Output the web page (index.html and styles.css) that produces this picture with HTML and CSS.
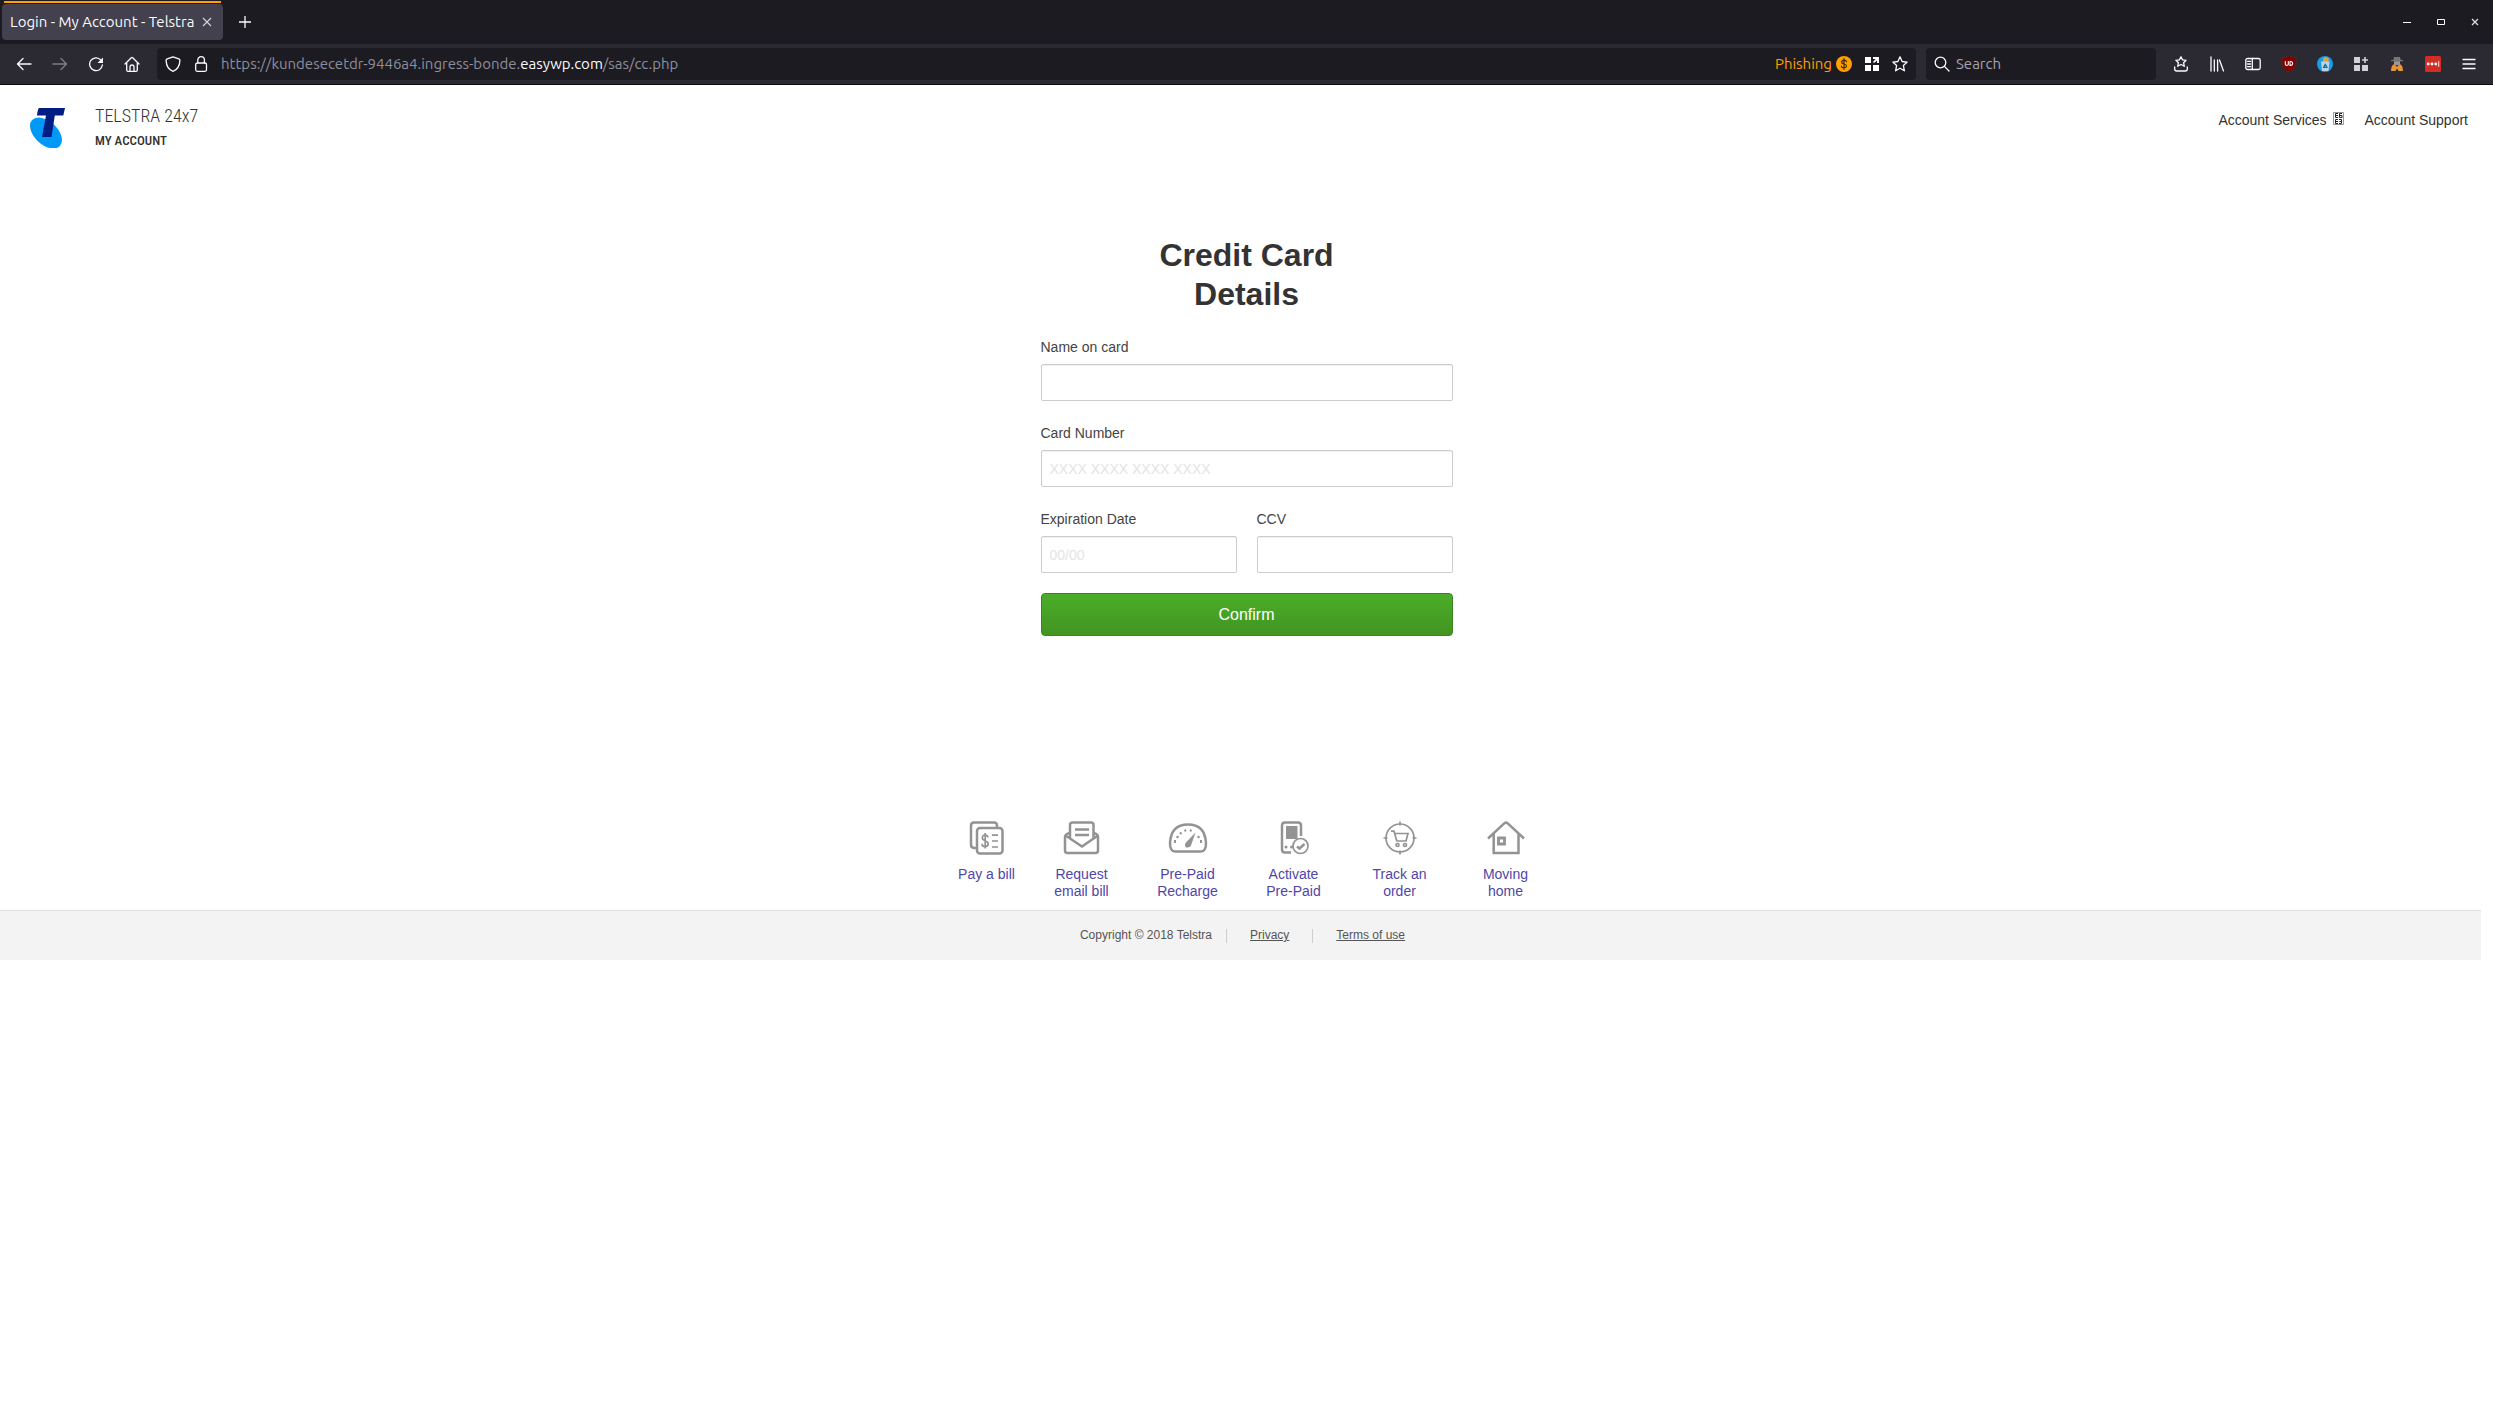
FILE: index.html
```html
<!DOCTYPE html>
<html lang="en">
<head>
<meta charset="utf-8">
<title>Login - My Account - Telstra</title>
<link rel="stylesheet" href="styles.css">
</head>
<body>
<div class="browser">
  <div class="tabstrip">
    <div class="tab">
      <span class="tab-title">Login - My Account - Telstra</span>
      <button class="tab-close" type="button" aria-label="Close tab"><svg width="10" height="10" viewBox="0 0 10 10"><path d="M1 1l8 8M9 1l-8 8" stroke="#d6d6dc" stroke-width="1.1"/></svg></button>
    </div>
    <button class="tool new-tab" type="button" aria-label="New tab"><svg width="14" height="14" viewBox="0 0 14 14"><path d="M7 1v12M1 7h12" stroke="#fbfbfe" stroke-width="1.3"/></svg></button>
    <div class="window-controls">
      <button type="button" aria-label="Minimize"><svg width="10" height="10" viewBox="0 0 10 10"><path d="M1 5.500h8" stroke="#fff"/></svg></button>
      <button type="button" aria-label="Maximize"><svg width="10" height="10" viewBox="0 0 10 10"><path d="M1.500 2.500h7v5h-7z" fill="none" stroke="#fff"/></svg></button>
      <button type="button" aria-label="Close"><svg width="10" height="10" viewBox="0 0 10 10"><path d="M2 2l6 6M8 2l-6 6" stroke="#ddd" stroke-width="1.300"/></svg></button>
    </div>
  </div>
  <div class="toolbar">
    <div class="tool-group">
      <button class="tool" type="button" aria-label="Back"><svg width="16" height="16" viewBox="0 0 16 16"><path d="M15 8H1.500M7 2.500L1.500 8 7 13.500"/></svg></button>
      <button class="tool dim" type="button" aria-label="Forward"><svg width="16" height="16" viewBox="0 0 16 16"><path d="M1 8h13.500M9 2.500L14.500 8 9 13.500"/></svg></button>
      <button class="tool" type="button" aria-label="Reload"><svg width="16" height="16" viewBox="0 0 16 16"><path d="M13 4.200A6.400 6.400 0 1 0 14.400 9"/><path d="M15 1.500V7H9.500z" fill="#fbfbfe" stroke="none"/></svg></button>
      <button class="tool" type="button" aria-label="Home"><svg width="16" height="16" viewBox="0 0 16 16"><path d="M1 8l6.300-6.300a1 1 0 0 1 1.400 0L15 8M2.700 7v7q0 1.300 1.300 1.300h8q1.300 0 1.300-1.300V7M6 15v-4a2 2 0 0 1 4 0v4"/></svg></button>
    </div>
    <div class="urlbar">
      <svg width="16" height="16" viewBox="0 0 16 16"><path d="M8 .8l5.800 2.100q1.200.4 1.100 1.700Q14.500 12.800 8 15.300 1.500 12.800 1.100 4.600 1 3.300 2.200 2.900z"/></svg>
      <svg width="16" height="16" viewBox="0 0 16 16"><rect x="2.700" y="7" width="10.800" height="8.300" rx="1.500"/><path d="M4.800 7V4a3.300 3.300 0 0 1 6.600 0v3"/></svg>
      <div class="url">https://kundesecetdr-9446a4.ingress-bonde.<span class="domain">easywp.com</span>/sas/cc.php</div>
      <div class="container-label">Phishing <svg width="16" height="16" viewBox="0 0 16 16"><circle cx="8" cy="8" r="8" fill="#ff9f00" stroke="none"/><path d="M10.500 5.800Q10 4.200 8 4.200T5.600 6Q5.600 7.500 8 8t2.500 2Q10.300 11.800 8 11.800T5.400 10.300M8 2.700v10.600" stroke="#3c2b10" stroke-width="1.200"/></svg></div>
      <svg width="16" height="16" viewBox="0 0 16 16"><path d="M1 1h6v6H1zM1 9h6v6H1zM9 9h6v6H9zM9 1h6v6h-2V4.500L10 7 9 6l2.500-3H9z" fill="#fff" stroke="none"/></svg>
      <svg width="16" height="16" viewBox="0 0 16 16"><path d="M8 .8l2.100 4.700 5.100.6-3.800 3.500 1 5.200L8 12.200l-4.400 2.600 1-5.200L.8 6.100l5.100-.6z"/></svg>
    </div>
    <div class="searchbar">
      <svg width="16" height="16" viewBox="0 0 16 16"><circle cx="6.500" cy="6.500" r="5.300"/><path d="M10.400 10.400L15 15"/></svg>
      <input class="search" type="text" placeholder="Search" aria-label="Search">
    </div>
    <div class="tool-group">
      <button class="tool" type="button" aria-label="Bookmarks"><svg width="16" height="16" viewBox="0 0 16 16"><path d="M8 .8l1.600 3.100 3.500.4-2.500 2.400.7 3.600L8 8.500l-3.300 1.800.7-3.600-2.500-2.400 3.500-.4zM1.700 11v2q0 2 2 2h8.600q2 0 2-2v-2"/></svg></button>
      <button class="tool" type="button" aria-label="Library"><svg width="16" height="16" viewBox="0 0 16 16"><path d="M2 1v14M5.300 4v11M8.600 4v11M10.500 4l4 11"/></svg></button>
      <button class="tool" type="button" aria-label="Sidebars"><svg width="16" height="16" viewBox="0 0 16 16"><rect x=".8" y="2.500" width="14.400" height="11" rx="1.800"/><path d="M7.300 2.500v11M2.500 5.300h3M2.500 8h3M2.500 10.700h3"/></svg></button>
      <button class="tool" type="button" aria-label="Content blocker"><svg width="16" height="16" viewBox="0 0 16 16"><path d="M8 0q3 1.700 7 1.700V7q0 6-7 9-7-3-7-9V1.700Q5 1.700 8 0z" fill="#800000" stroke="#6b2a2c" stroke-width=".5"/><path d="M4.300 5.500v2.700q0 1.200 1.500 1.200t1.500-1.200V5.500M9 5.500v3.900h.8q1.900 0 1.900-1.900t-1.900-2z" stroke="#fff" stroke-width="1.100"/></svg></button>
      <button class="tool" type="button" aria-label="Cookie cleaner"><svg width="16" height="16" viewBox="0 0 16 16"><circle cx="8" cy="8" r="8" fill="#159de8" stroke="none"/><circle cx="8.800" cy="3.800" r="2.900" fill="#e7a03b" stroke="none"/><path d="M4 5.500h8.500L11.500 15h-6.500z" fill="#b5d6e8" stroke="none"/><path d="M8.300 8.300l1.800 3H6.500z" stroke="#276a93"/></svg></button>
      <button class="tool" type="button" aria-label="Extensions"><svg width="16" height="16" viewBox="0 0 16 16"><path d="M1 1h6v6H1zM1 9h6v6H1zM9 9h6v6H9zM11.200 1h1.600v2.200H15v1.600h-2.200V7h-1.600V4.800H9V3.200h2.200z" fill="#d0d0d5" stroke="none"/></svg></button>
      <button class="tool" type="button" aria-label="User agent"><svg width="16" height="16" viewBox="0 0 16 16"><path d="M5 1h6l.7 3H14v1.200H2V4h2.300z" fill="#777" stroke="none"/><path d="M5 5.200h6V8q-3 2.500-6 0z" fill="#999" stroke="none"/><path d="M2 15q0-6 3.500-7L8 11l2.500-3q3.500 1 3.500 7H9.500L8 12.500 6.500 15z" fill="#e8963a" stroke="none"/></svg></button>
      <button class="tool" type="button" aria-label="Passwords"><svg width="16" height="16" viewBox="0 0 16 16"><rect width="16" height="16" rx="1.500" fill="#d32d27" stroke="none"/><g fill="#fff" stroke="none"><circle cx="3.200" cy="8" r="1.400"/><circle cx="7" cy="8" r="1.400"/><circle cx="10.800" cy="8" r="1.400"/><path d="M13.300 5.300h.9v5.400h-.9z"/></g></svg></button>
      <button class="tool" type="button" aria-label="Menu"><svg width="16" height="16" viewBox="0 0 16 16"><path d="M2 3.500h12M2 8h12M2 12.500h12"/></svg></button>
    </div>
  </div>
</div>

<header class="site-header">
  <div class="brand">
    <svg width="35" height="40" viewBox="0 0 35 40"><ellipse cx="16" cy="25" rx="19" ry="11.500" transform="rotate(43 16 25)" fill="#0099f8"/><path d="M9 0h26l-1.700 7.500H24.800L21.500 29H12l4-21.500H7q.5-6 2-7.500z" fill="#001e82"/></svg>
    <div>
      <div class="brand-name">TELSTRA 24x7</div>
      <div class="brand-sub">MY ACCOUNT</div>
    </div>
  </div>
  <nav class="account-nav">
    <a href="#">Account Services <svg width="11" height="13" viewBox="0 0 11 13"><path d="M.5.500h10v12H.5z" fill="none" stroke="#999"/><path d="M5 1.500H2.500v4H5M2.500 3.500H5M9 1.500H6.500v4H9v-2H6.500M5 7.500H2.500v4H5M2.500 9.500H5M6 7.500h2.500v4H6M6.500 9.500h2" fill="none" stroke="#222"/></svg></a>
    <a href="#">Account Support</a>
  </nav>
</header>

<main class="card-form">
  <h1>Credit Card<br>Details</h1>
  <div class="field">
    <label for="holder">Name on card</label>
    <input id="holder" type="text" autocomplete="off">
  </div>
  <div class="field">
    <label for="number">Card Number</label>
    <input id="number" type="text" placeholder="XXXX XXXX XXXX XXXX" autocomplete="off">
  </div>
  <div class="field-pair">
    <div class="field">
      <label for="expiry">Expiration Date</label>
      <input id="expiry" type="text" placeholder="00/00" autocomplete="off">
    </div>
    <div class="field">
      <label for="ccv">CCV</label>
      <input id="ccv" type="text" autocomplete="off">
    </div>
  </div>
  <button class="confirm" type="button">Confirm</button>
</main>

<nav class="quick-links">
  <a href="#"><svg width="38" height="34" viewBox="0 0 38 34"><path d="M8 27H6.500Q3 27 3 23.500v-19Q3 1.500 6 1.500h20q3 0 3 3V6"/><rect x="9" y="7" width="25.500" height="25.500" rx="3"/><path d="M20 16.500q-.5-2.500-3-2.500t-2.700 2.800q0 2 2.900 2.900t3 3.200q-.2 2.800-3.200 2.800t-3-3M17.200 12v15.500M24 14.200h6M24 20h6M24 26h6" stroke-width="1.700"/></svg>Pay a bill</a>
  <a href="#"><svg width="38" height="34" viewBox="0 0 38 34"><path d="M7 12q-5 1-5 4v13.500Q2 32 4.500 32h28q2.500 0 2.500-2.500V16q0-3-4.500-4"/><path d="M2.500 14.500L19 25.500l16-11M7 17V4q0-2.500 2.500-2.500h18.500q2.500 0 2.500 2.500v13M12 8.500h14M12 14h14"/></svg>Request<br>email bill</a>
  <a href="#"><svg width="40" height="34" viewBox="0 0 40 34"><path d="M5 30q-3-1.500-3-8Q3 3.500 20 3.500T38 22q0 6.500-3 8-1 .5-3 .5H8q-2 0-3-.5z"/><path d="M27.500 11.500L22.800 25q-1.500 2-5.300 1.200-1-3 0-4.200z" fill="#939393" stroke="none"/><path d="M7 19v3M33 19v3M8.500 15.500l2 1M31.500 15.500l-2 1M12 11.500l1.500 1.500M17 8.500l.5 2M23 8.500l-.5 2" stroke-width="2"/></svg>Pre-Paid<br>Recharge</a>
  <a href="#"><svg width="30" height="34" viewBox="0 0 30 34"><path d="M12 31.500H6q-3 0-3-3V4.500q0-3 3-3h13q3 0 3 3V15"/><path d="M7 5h11.500v13H7z" fill="#939393" stroke="none"/><circle cx="7" cy="26" r="1.500" fill="#939393" stroke="none"/><circle cx="12.500" cy="26" r="1.500" fill="#939393" stroke="none"/><circle cx="21.500" cy="25" r="7.500" stroke-width="1.700"/><path d="M18 25.500l2.500 2 5-4.500"/></svg>Activate<br>Pre-Paid</a>
  <a href="#"><svg width="34" height="34" viewBox="0 0 34 34"><g stroke-width="1.700"><circle cx="17" cy="17" r="14"/><path d="M17 .5v4M17 29.500v4M.5 17h4M29.500 17h4M8 10.200h3L13.800 20H23l2-7.500H12"/><circle cx="14.500" cy="24" r="1.500"/><circle cx="22" cy="24" r="1.500"/></g></svg>Track an<br>order</a>
  <a href="#"><svg width="38" height="34" viewBox="0 0 38 34"><path d="M1 17.500L17.500 2.200q1.500-1.200 3 0L37 17.500M6.700 13v19H31.500V13" /><path d="M11.500 17h6v6h-6z" stroke-width="2.800"/></svg>Moving<br>home</a>
</nav>

<footer class="site-footer">
  <span>Copyright © 2018 Telstra</span>
  <span class="rule"></span>
  <a href="#">Privacy</a>
  <span class="rule"></span>
  <a href="#">Terms of use</a>
</footer>
</body>
</html>
```
FILE: styles.css
```css
* { box-sizing: border-box; }
body {
  margin: 0;
  background: #fff;
  color: #333;
  font: 14px/17px "Liberation Sans", Arial, sans-serif;
}
button { border: 0; padding: 0; background: none; cursor: pointer; }
svg { flex: none; }

/* Browser window */
.browser {
  color: #fbfbfe;
  font: 15px/20px Ubuntu, "Noto Sans", sans-serif;
  border-bottom: 1px solid #0c0c0d;
}
.tabstrip {
  display: flex;
  align-items: center;
  height: 44px;
  padding: 0 1px 0 2px;
  background: #1c1b22;
}
.tab {
  position: relative;
  display: flex;
  align-items: center;
  justify-content: space-between;
  width: 221px;
  height: 36px;
  padding: 0 11px 0 8px;
  border-radius: 4px;
  background: #42414d;
}
.tab::before {
  content: "";
  position: absolute;
  top: -3px;
  left: 2px;
  right: 2px;
  height: 2px;
  background: #ff9f00;
}
.tab-title { white-space: nowrap; }
.tab-close { display: flex; }
.new-tab { margin-left: 4px; }
.window-controls { display: flex; margin-left: auto; }
.window-controls button {
  display: flex;
  align-items: center;
  justify-content: center;
  width: 34px;
  height: 34px;
}
.toolbar {
  display: flex;
  align-items: center;
  height: 40px;
  padding: 0 6px;
  background: #2b2a33;
}
.toolbar svg {
  fill: none;
  stroke: #fbfbfe;
  stroke-width: 1.3;
  stroke-linecap: round;
  stroke-linejoin: round;
}
.tool-group { display: flex; }
.tool {
  display: flex;
  align-items: center;
  justify-content: center;
  width: 36px;
  height: 32px;
}
.dim { opacity: 0.4; }
.urlbar, .searchbar {
  display: flex;
  align-items: center;
  height: 32px;
  border-radius: 4px;
  background: #1c1b22;
}
.urlbar {
  flex: 1;
  gap: 12px;
  margin: 0 10px 0 7px;
  padding: 0 8px;
}
.url { flex: 1; color: #8f8f9d; white-space: nowrap; }
.domain { color: #fbfbfe; }
.container-label {
  display: flex;
  align-items: center;
  gap: 4px;
  color: #ff9f00;
}
.searchbar {
  width: 230px;
  margin-right: 7px;
  padding: 0 8px;
  gap: 6px;
}
.search {
  flex: 1;
  min-width: 0;
  border: 0;
  padding: 0;
  background: none;
  color: #fbfbfe;
  font: inherit;
}
.search::placeholder { color: #a5a5ad; opacity: 1; }

/* Site header */
.site-header {
  display: flex;
  justify-content: space-between;
  padding: 23px 25px 0 30px;
}
.brand { display: flex; gap: 30px; }
.brand-name, .brand-sub {
  font-family: "Roboto Condensed", "Liberation Sans Narrow", Roboto, sans-serif;
  white-space: nowrap;
}
.brand-name { font-size: 18px; line-height: 16px; font-weight: 300; margin-bottom: 8px; }
.brand-sub { font-size: 13px; line-height: 18px; font-weight: 500; }
.account-nav { display: flex; gap: 20px; padding-top: 4px; }
.account-nav a { color: #333; text-decoration: none; }
.account-nav svg { margin-left: 3px; }

/* Card form */
.card-form {
  display: flex;
  flex-direction: column;
  gap: 20px;
  width: 412px;
  margin: 86px auto 0;
}
h1 {
  margin: 0 0 1px;
  font-size: 32px;
  line-height: 39px;
  text-align: center;
}
.field {
  display: flex;
  flex: 1;
  flex-direction: column;
  gap: 8px;
  min-width: 0;
  padding-top: 4px;
}
.field label { color: #444; }
.field input {
  width: 100%;
  height: 37px;
  padding: 0 8px;
  border: 1px solid #ccc;
  border-radius: 2px;
  background: #fff;
  box-shadow: inset 0 1px 0 #f0f0f0;
  font: inherit;
}
.field input::placeholder { color: #e4e4e4; opacity: 1; }
.field-pair { display: flex; gap: 20px; }
.confirm {
  height: 43px;
  border: 1px solid #3a8420;
  border-radius: 4px;
  background: linear-gradient(#4bad29, #429421);
  color: #fff;
  font: 16px/20px "Liberation Sans", Arial, sans-serif;
}

/* Quick links */
.quick-links {
  display: flex;
  justify-content: center;
  margin-top: 185px;
  padding-left: 10px;
}
.quick-links a {
  display: flex;
  flex-direction: column;
  align-items: center;
  gap: 11px;
  width: 106px;
  color: #4f46a8;
  text-align: center;
  text-decoration: none;
}
.quick-links a:first-child { width: 84px; }
.quick-links svg { fill: none; stroke: #939393; stroke-width: 2.5; }

/* Footer */
.site-footer {
  display: flex;
  align-items: center;
  justify-content: center;
  height: 50px;
  margin: 10px 12px 0 0;
  padding-left: 4px;
  border-top: 1px solid #e0e0e0;
  background: #f3f3f3;
  color: #555;
  font-size: 12px;
}
.site-footer a { color: #555; }
.rule { width: 1px; height: 14px; margin: 0 23px; background: #ccc; }
span + .rule { margin-left: 14px; }
```
